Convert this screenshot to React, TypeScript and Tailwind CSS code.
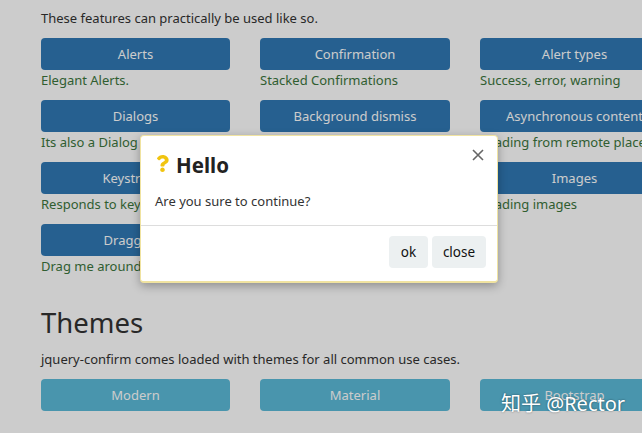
import { FaQuestion } from "react-icons/fa";

const font = "font-['Segoe_UI','Noto_Sans',sans-serif]";

function Cell({ label, note, theme, wide }: { label: string; note?: string; theme?: boolean; wide?: boolean }) {
  return (
    <div className={(wide ? "w-[190px]" : "w-[189px]") + " shrink-0"}>
      <div
        className={
          "h-8 pt-[1px] rounded-[4px] flex items-center justify-center text-[13px] whitespace-nowrap text-white " +
          (theme ? "bg-[#5cbbd9]" : "bg-[#3079b5]")
        }
      >
        {label}
      </div>
      {note && <div className="h-[30px] text-[13px] leading-[20px] text-[#3c763d] whitespace-nowrap">{note}</div>}
    </div>
  );
}

const rows = [
  [["Alerts", "Elegant Alerts."], ["Confirmation", "Stacked Confirmations"], ["Alert types", "Success, error, warning"]],
  [["Dialogs", "Its also a Dialog"], ["Background dismiss", "Close on outside click"], ["Asynchronous content", "Loading from remote places"]],
  [["Keystrokes", "Responds to keystrokes"], ["Icons", "Font icon support"], ["Images", "Loading images"]],
  [["Draggable", "Drag me around"], ["Animations", "Fancy animations"]],
];

export default function App() {
  return (
    <div className={"relative w-[642px] h-[433px] overflow-hidden bg-white text-[#333] " + font}>
      <div className="pl-[41px] w-[720px] pt-[8px]">
        <p className="h-[30px] text-[13px] leading-[20px] text-[#333]">These features can practically be used like so.</p>
        <div className="flex flex-col">
          {rows.map((r, i) => (
            <div key={i} className="flex gap-[30px]">
              {r.map(([a, b], j) => (
                <Cell key={a} label={a} note={b} wide={j === 1} />
              ))}
            </div>
          ))}
        </div>
        <h2 className="mt-[17px] h-[45px] text-[27.5px] leading-[40px] font-normal text-[#333]">Themes</h2>
        <p className="h-[31px] text-[13px] leading-[22px] text-[#333]">jquery-confirm comes loaded with themes for all common use cases.</p>
        <div className="flex gap-[30px]">
          <Cell label="Modern" theme />
          <Cell label="Material" theme wide />
          <Cell label="Bootstrap" theme />
        </div>
      </div>

      <div className="absolute inset-0 bg-black/20" />

      <div className="absolute left-[140px] top-[135px] w-[358px] h-[148px] bg-white rounded-[4px] border-t border-x border-b-2 border-[#f0e3a0] shadow-[0_3px_10px_rgba(0,0,0,0.3)]">
        <div className="flex items-center h-[55px] pl-[13px] pt-[3px] gap-[5px]">
          <FaQuestion className="text-[#f1c40f] text-[17px] -mt-[4px]" />
          <span className="text-[20.5px] font-bold text-[#222] leading-none">Hello</span>
        </div>
        <svg className="absolute right-[13px] top-[13px]" width="12" height="12" viewBox="0 0 12 12">
          <path d="M1 1L11 11M11 1L1 11" stroke="#666" strokeWidth="1.6" fill="none" />
        </svg>
        <p className="px-[14px] text-[13px] leading-[20px] text-[#333] h-[34px]">Are you sure to continue?</p>
        <div className="border-t border-[#ddd] flex justify-end gap-[4px] pt-[10px] pr-[11px]">
          <div className="h-8 w-[39px] rounded-[4px] bg-[#ecf0f1] text-[#111] text-[13.5px] flex items-center justify-center">ok</div>
          <div className="h-8 w-[54px] rounded-[4px] bg-[#ecf0f1] text-[#111] text-[13.5px] flex items-center justify-center">close</div>
        </div>
      </div>

      <div className="absolute left-[501px] top-[391px] text-white text-[20px] leading-[26px] whitespace-nowrap [text-shadow:0_0_2px_rgba(0,0,0,0.5)] font-['Noto_Sans','Noto_Sans_CJK_SC',sans-serif]">
        知乎 @Rector
      </div>
    </div>
  );
}
